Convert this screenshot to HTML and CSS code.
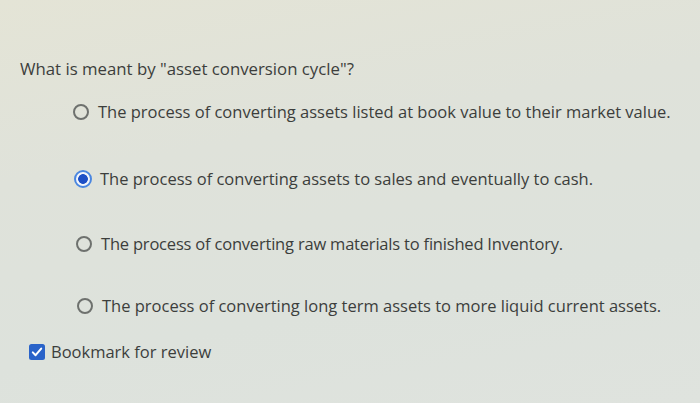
FILE: index.html
```html
<!DOCTYPE html>
<html>
<head>
<meta charset="utf-8">
<link rel="stylesheet" href="styles.css">
</head>
<body>
<div class="page">
  <p class="question">What is meant by "asset conversion cycle"?</p>
  <div class="options">
    <label class="option opt1"><span class="radio"></span><span class="label">The process of converting assets listed at book value to their market value.</span></label>
    <label class="option opt2"><span class="radio checked"></span><span class="label">The process of converting assets to sales and eventually to cash.</span></label>
    <label class="option opt3"><span class="radio"></span><span class="label">The process of converting raw materials to finished Inventory.</span></label>
    <label class="option opt4"><span class="radio"></span><span class="label">The process of converting long term assets to more liquid current assets.</span></label>
  </div>
  <label class="bookmark"><span class="check"><svg viewBox="0 0 16 16" width="16" height="16"><rect x="0" y="0" width="16" height="16" rx="2.5" fill="#2a63c9"/><path d="M3.8 8.4 L6.6 11.2 L12.2 4.6" fill="none" stroke="#fff" stroke-width="2" stroke-linecap="round" stroke-linejoin="round"/></svg></span><span class="label">Bookmark for review</span></label>
</div>
</body>
</html>
```
FILE: styles.css
```css
html, body {
  margin: 0;
  padding: 0;
}
body {
  width: 700px;
  height: 403px;
  overflow: hidden;
  background: linear-gradient(170deg, #e4e4d6 0%, #dfe2da 35%, #dde2dc 70%, #dfe3de 100%);
  font-family: "Open Sans", "Liberation Sans", sans-serif;
  color: #3c3e3c;
}
.page {
  display: flex;
  flex-direction: column;
  padding: 58px 0 0 20px;
}
.question {
  margin: 0;
  font-size: 16.8px;
  line-height: 22px;
}
.options {
  display: flex;
  flex-direction: column;
}
.option {
  display: flex;
  align-items: center;
  gap: 9px;
  font-size: 16.5px;
  line-height: 22px;
}
.opt1 { margin: 21px 0 0 53px; }
.opt2 { margin: 45px 0 0 54px; gap: 8px; }
.opt3 { margin: 43px 0 0 56px; letter-spacing: -0.2px; }
.opt4 { margin: 40px 0 0 57px; }
.radio {
  width: 12px;
  height: 12px;
  border: 2px solid #6e716e;
  border-radius: 50%;
  flex: none;
}
.radio.checked {
  width: 14px;
  height: 14px;
  border-color: #4a86e0;
  background: radial-gradient(circle, #1d4fc6 0 4.5px, #f2f5fb 5.2px);
}
.bookmark {
  display: flex;
  align-items: center;
  gap: 6px;
  margin: 24px 0 0 9px;
  font-size: 16.5px;
  line-height: 22px;
}
.check {
  display: flex;
  width: 16px;
  height: 16px;
}
```
